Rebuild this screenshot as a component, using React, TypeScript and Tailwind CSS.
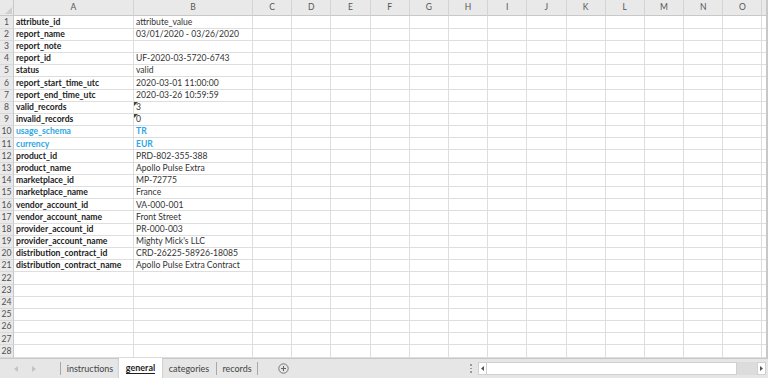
import React from "react";

const cols = ["A","B","C","D","E","F","G","H","I","J","K","L","M","N","O"];

type Row = { a?: string; b?: string; blue?: boolean; tri?: boolean };
const data: Row[] = [
  { a: "attribute_id", b: "attribute_value" },
  { a: "report_name", b: "03/01/2020 - 03/26/2020" },
  { a: "report_note", b: "" },
  { a: "report_id", b: "UF-2020-03-5720-6743" },
  { a: "status", b: "valid" },
  { a: "report_start_time_utc", b: "2020-03-01 11:00:00" },
  { a: "report_end_time_utc", b: "2020-03-26 10:59:59" },
  { a: "valid_records", b: "3", tri: true },
  { a: "invalid_records", b: "0", tri: true },
  { a: "usage_schema", b: "TR", blue: true },
  { a: "currency", b: "EUR", blue: true },
  { a: "product_id", b: "PRD-802-355-388" },
  { a: "product_name", b: "Apollo Pulse Extra" },
  { a: "marketplace_id", b: "MP-72775" },
  { a: "marketplace_name", b: "France" },
  { a: "vendor_account_id", b: "VA-000-001" },
  { a: "vendor_account_name", b: "Front Street" },
  { a: "provider_account_id", b: "PR-000-003" },
  { a: "provider_account_name", b: "Mighty Mick's LLC" },
  { a: "distribution_contract_id", b: "CRD-26225-58926-18085" },
  { a: "distribution_contract_name", b: "Apollo Pulse Extra Contract" },
];

const rows: Row[] = Array.from({ length: 28 }, (_, i) => data[i] ?? {});

export default function App() {
  return (
    <div className="w-[768px] h-[378px] bg-white flex flex-col overflow-hidden" style={{ fontFamily: "Lato, 'Open Sans', sans-serif" }}>
      <div className="flex-1 flex overflow-hidden">
        <div className="grid flex-1 grid-cols-[14px_120px_119px_repeat(13,39.2px)_1fr] grid-rows-[16.4px_repeat(28,12.2px)] content-start">
          {/* header row */}
          <div className="relative bg-[#e9e9e9] border-r border-b border-[#c8c8c8]">
            <svg className="absolute right-[1px] bottom-[1px]" width="7" height="7" viewBox="0 0 7 7">
              <polygon points="7,0 7,7 0,7" fill="#cfcfcf" />
            </svg>
          </div>
          {cols.map((c) => (
            <div key={c} className="bg-[#e9e9e9] border-r border-b border-r-[#d4d4d4] border-b-[#c8c8c8] flex items-center justify-center text-[8.5px] text-[#555]">
              {c}
            </div>
          ))}
          <div className="bg-[#e9e9e9] border-b border-[#c8c8c8]" />
          {rows.map((r, i) => (
            <React.Fragment key={i}>
              <div className="bg-[#e9e9e9] border-r border-b border-r-[#c8c8c8] border-b-[#d9d9d9] flex items-center justify-center text-[8.6px] text-[#505050] leading-none">
                {i + 1}
              </div>
              <div className={`border-r border-b border-[#dedede] flex items-center pl-[2px] text-[8.6px] leading-none font-bold whitespace-nowrap ${r.blue ? "text-[#2fa6e3]" : "text-[#222]"}`}>
                {r.a}
              </div>
              <div className={`relative border-r border-b border-[#dedede] flex items-center pl-[2px] text-[8.6px] leading-none whitespace-nowrap ${r.blue ? "text-[#2fa6e3] font-bold" : "text-[#333]"}`}>
                {r.tri && (
                  <svg className="absolute left-0 top-0" width="4" height="4" viewBox="0 0 4 4">
                    <polygon points="0,0 4,0 0,4" fill="#3c4a3e" />
                  </svg>
                )}
                {r.b}
              </div>
              {cols.slice(2).map((c) => (
                <div key={c} className="border-r border-b border-[#dedede]" />
              ))}
              <div className="border-b border-[#dedede]" />
            </React.Fragment>
          ))}
        </div>
        <div className="w-[2px] bg-[#c8c8c8]" />
      </div>
      {/* tab bar */}
      <div className="h-[20px] shrink-0 bg-[#e6e6e6] border-t border-[#c8c8c8] flex items-stretch text-[9px] text-[#444] relative">
        <div className="w-[60px] flex items-center pl-[14px] gap-[12px]">
          <svg width="5" height="6" viewBox="0 0 5 6"><polygon points="4,0 4,6 0,3" fill="#c4c4c4" /></svg>
          <svg width="5" height="6" viewBox="0 0 5 6"><polygon points="1,0 1,6 5,3" fill="#c4c4c4" /></svg>
        </div>
        <div className="flex items-center"><div className="w-px h-[13px] bg-[#a8a8a8]" /></div>
        <div className="w-[58px] flex items-center justify-center">instructions</div>
        <div className="w-[43px] bg-white flex items-center justify-center font-bold text-[#1f1f1f] shadow-[0_1px_2px_rgba(0,0,0,0.25)] -mt-px">
          <span className="border-b border-[#1f1f1f] leading-[11px]">general</span>
        </div>
        <div className="w-[54px] flex items-center justify-center">categories</div>
        <div className="flex items-center"><div className="w-px h-[13px] bg-[#a8a8a8]" /></div>
        <div className="w-[40px] flex items-center justify-center">records</div>
        <div className="flex items-center"><div className="w-px h-[13px] bg-[#a8a8a8]" /></div>
        <div className="w-[50px] flex items-center justify-center">
          <svg width="11" height="11" viewBox="0 0 11 11">
            <circle cx="5.5" cy="5.5" r="4.7" fill="none" stroke="#777" strokeWidth="1" />
            <path d="M5.5 3v5M3 5.5h5" stroke="#666" strokeWidth="1.1" />
          </svg>
        </div>
        <div className="flex-1" />
        <div className="w-[8px] flex flex-col items-center justify-center gap-[2px] mr-[3px]">
          <div className="w-[1.5px] h-[1.5px] bg-[#9a9a9a]" />
          <div className="w-[1.5px] h-[1.5px] bg-[#9a9a9a]" />
          <div className="w-[1.5px] h-[1.5px] bg-[#9a9a9a]" />
        </div>
        <div className="w-[290px] flex items-center pr-[2px]">
          <div className="h-[13px] w-[9px] bg-white border border-[#d0d0d0] flex items-center justify-center">
            <svg width="3" height="5" viewBox="0 0 3 5"><polygon points="3,0 3,5 0,2.5" fill="#555" /></svg>
          </div>
          <div className="h-[13px] flex-1 bg-white border border-[#d0d0d0] border-l-0" />
          <div className="h-[13px] w-[20px] bg-[#dcdcdc]" />
          <div className="h-[13px] w-[9px] bg-white border border-[#d0d0d0] flex items-center justify-center">
            <svg width="3" height="5" viewBox="0 0 3 5"><polygon points="0,0 0,5 3,2.5" fill="#555" /></svg>
          </div>
        </div>
      </div>
    </div>
  );
}
